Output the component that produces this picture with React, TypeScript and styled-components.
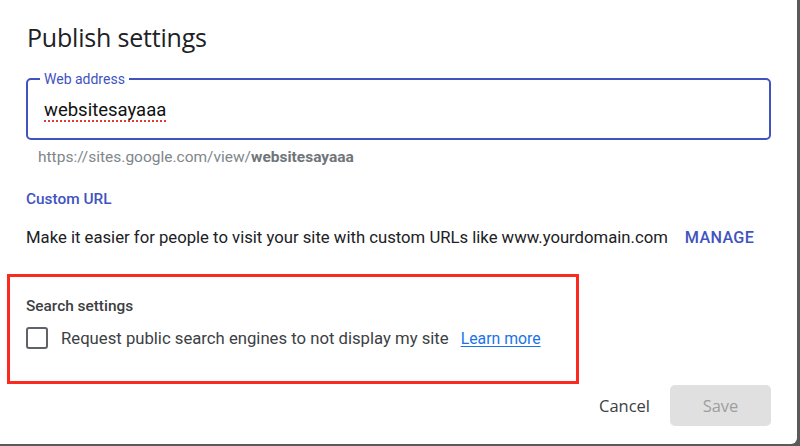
import styled, { createGlobalStyle } from 'styled-components';

const GlobalStyle = createGlobalStyle`
  html, body {
    margin: 0;
    padding: 0;
    background: #5a5a5a;
    font-family: Roboto, "Liberation Sans", Arial, sans-serif;
  }
`;

const Dialog = styled.div`
  box-sizing: border-box;
  width: 797px;
  height: 444px;
  background: #ffffff;
  border-bottom-right-radius: 6px;
  padding: 22px 26px 0 26px;
  display: flex;
  flex-direction: column;
  overflow: hidden;
`;

const Title = styled.h1`
  margin: 0 0 0 1px;
  font-family: "Open Sans", Roboto, sans-serif;
  font-size: 25px;
  font-weight: 400;
  line-height: 30px;
  color: #202124;
  letter-spacing: -0.2px;
`;

const Field = styled.div`
  position: relative;
  margin-top: 26px;
  padding-left: 16px;
  width: 745px;
  height: 62px;
  box-sizing: border-box;
  border: 2px solid #4153bf;
  border-radius: 5px;
  display: flex;
  align-items: center;
`;

const FieldLabel = styled.span`
  position: absolute;
  top: -9px;
  left: 12px;
  padding: 0 4px;
  background: #ffffff;
  font-size: 14px;
  line-height: 16px;
  color: #4153bf;
`;

const FieldValue = styled.span`
  margin-top: 2px;
  font-size: 18.5px;
  line-height: 24px;
  color: #111111;
  text-decoration: underline dotted #e53935;
  text-underline-offset: 4px;
  text-decoration-thickness: 2px;
`;

const Helper = styled.div`
  margin: 8px 0 0 12px;
  font-size: 15.5px;
  line-height: 18px;
  color: #80868b;

  b {
    color: #70757a;
    font-weight: 700;
  }
`;

const SectionLabel = styled.div<{ $color?: string }>`
  font-size: 15.4px;
  line-height: 18px;
  font-weight: 500;
  color: ${({ $color }) => $color || '#3c4043'};
`;

const CustomUrl = styled(SectionLabel)`
  margin-top: 24px;
`;

const ManageRow = styled.div`
  margin-top: 20px;
  display: flex;
  align-items: center;
  font-size: 16.7px;
  line-height: 20px;
  color: #202124;
`;

const TextButton = styled.span`
  margin-left: 17px;
  font-size: 16.2px;
  font-weight: 500;
  letter-spacing: 0.3px;
  color: #4153bf;
`;

const SearchSection = styled.div`
  margin: 26px 0 0 -19px;
  width: 572px;
  height: 110px;
  box-sizing: border-box;
  border: 3px solid #fb2a1e;
  padding: 20px 0 0 16px;
`;

const CheckRow = styled.label`
  margin-top: 12px;
  display: flex;
  align-items: center;
  height: 22px;
  font-size: 16.7px;
  color: #3c4043;
`;

const Box = styled.span`
  width: 18px;
  height: 18px;
  border: 2px solid #5f6368;
  border-radius: 3px;
  margin-right: 13px;
`;

const LearnMore = styled.a`
  margin-left: 12px;
  font-size: 15.8px;
  color: #1a73e8;
  text-decoration: underline;
  text-underline-offset: 2px;
`;

const Footer = styled.div`
  margin-top: 1px;
  display: flex;
  justify-content: flex-end;
  align-items: center;
  gap: 20px;
`;

const FlatButton = styled.button<{ $filled?: boolean }>`
  border: none;
  border-radius: 5px;
  font-family: "Open Sans", Roboto, sans-serif;
  font-size: 16.5px;
  font-weight: 500;
  height: 41px;
  padding: 0;
  width: ${({ $filled }) => ($filled ? '101px' : 'auto')};
  background: ${({ $filled }) => ($filled ? '#e0e0e0' : 'transparent')};
  color: ${({ $filled }) => ($filled ? '#9e9e9e' : '#3c4043')};
`;

export default function App() {
  return (
    <>
      <GlobalStyle />
      <Dialog>
        <Title>Publish settings</Title>
        <Field>
          <FieldLabel>Web address</FieldLabel>
          <FieldValue>websitesayaaa</FieldValue>
        </Field>
        <Helper>
          https://sites.google.com/view/<b>websitesayaaa</b>
        </Helper>
        <CustomUrl $color="#4153bf">Custom URL</CustomUrl>
        <ManageRow>
          Make it easier for people to visit your site with custom URLs like www.yourdomain.com
          <TextButton>MANAGE</TextButton>
        </ManageRow>
        <SearchSection>
          <SectionLabel>Search settings</SectionLabel>
          <CheckRow>
            <Box />
            Request public search engines to not display my site
            <LearnMore>Learn more</LearnMore>
          </CheckRow>
        </SearchSection>
        <Footer>
          <FlatButton>Cancel</FlatButton>
          <FlatButton $filled>Save</FlatButton>
        </Footer>
      </Dialog>
    </>
  );
}
